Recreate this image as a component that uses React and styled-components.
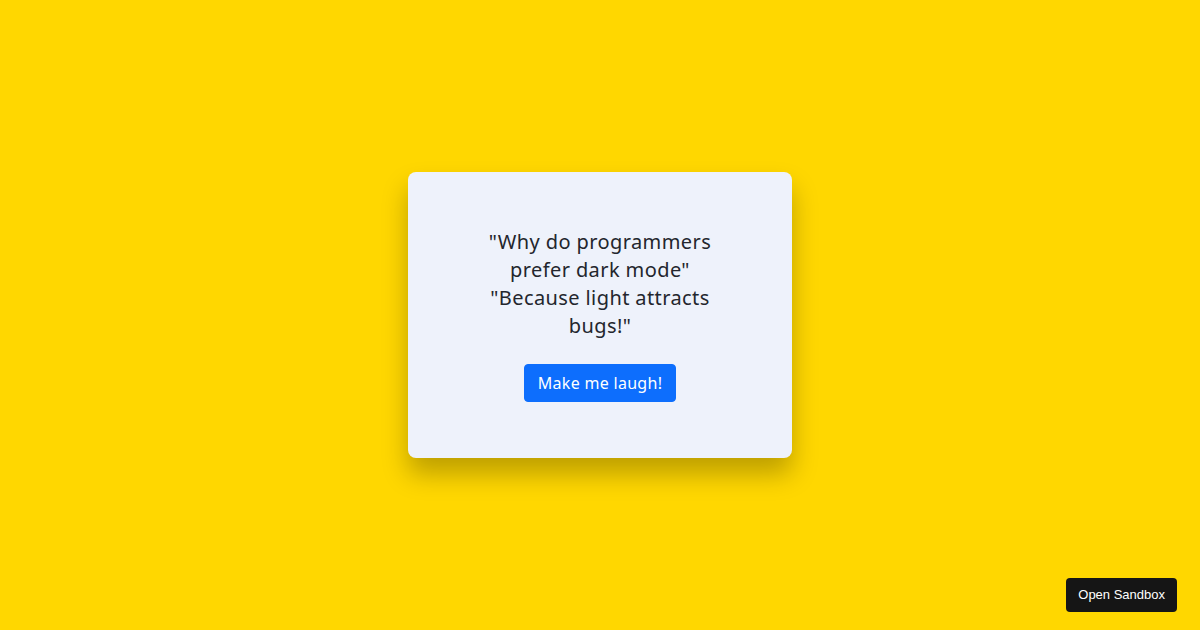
import React from "react";
import styled, { createGlobalStyle } from "styled-components";

const GlobalStyle = createGlobalStyle`
  html, body {
    margin: 0;
    padding: 0;
    height: 100%;
  }
  body {
    background: #ffd700;
    font-family: "Noto Sans", "Open Sans", sans-serif;
  }
  #root {
    height: 100%;
  }
`;

const Page = styled.main`
  height: 100vh;
  display: flex;
  align-items: center;
  justify-content: center;
  box-sizing: border-box;
`;

const Card = styled.section`
  width: 384px;
  box-sizing: border-box;
  padding: 56px 64px;
  background: #eef2fb;
  border-radius: 8px;
  box-shadow: 0 16px 26px rgba(0, 0, 0, 0.26);
  display: flex;
  flex-direction: column;
  align-items: center;
  text-align: center;
`;

const Joke = styled.p`
  margin: 0 0 24px;
  font-size: 20px;
  line-height: 28px;
  letter-spacing: 0.4px;
  color: #23262d;
  font-weight: 400;
`;

const Line = styled.span`
  display: block;
`;

const LaughButton = styled.button`
  font-family: inherit;
  font-size: 16px;
  line-height: 24px;
  letter-spacing: 0.3px;
  color: #fff;
  background: #0d6efd;
  border: 1px solid #0d6efd;
  border-radius: 4px;
  padding: 6px 13px;
  cursor: pointer;
`;

const SandboxLink = styled.a`
  position: fixed;
  right: 23px;
  bottom: 18px;
  height: 34px;
  padding: 0 12px 1px;
  display: flex;
  align-items: center;
  background: #151515;
  color: #fff;
  border-radius: 4px;
  font-family: "Liberation Sans", Arial, sans-serif;
  font-size: 13px;
  text-decoration: none;
  box-sizing: border-box;
`;

export default function App() {
  return (
    <>
      <GlobalStyle />
      <Page>
        <Card>
          <Joke>
            <Line>"Why do programmers prefer dark mode"</Line>
            <Line>"Because light attracts bugs!"</Line>
          </Joke>
          <LaughButton type="button">Make me laugh!</LaughButton>
        </Card>
      </Page>
      <SandboxLink href="#">Open Sandbox</SandboxLink>
    </>
  );
}
